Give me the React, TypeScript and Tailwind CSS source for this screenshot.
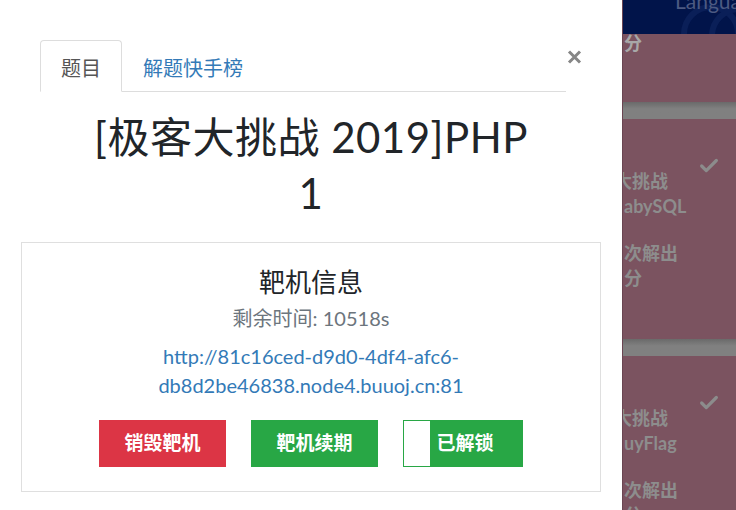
import { Check } from 'lucide-react';

const SANS = { fontFamily: 'Lato, "Noto Sans CJK SC", sans-serif' };

const Band = () => (
  <div className="h-[17px] bg-linear-to-b from-[#6a6a6a] from-0% to-[#808080] to-40%" />
);

const ChallengeCard = ({ tail }: { tail: string }) => (
  <div className="relative h-[220px]">
    <Check className="absolute left-[75px] top-[36px] text-[#8c8c8c]" size={22} strokeWidth={3.5} />
    <div className="pt-[50px] text-[18px] leading-[25px] font-bold text-[#8d8d8d] whitespace-nowrap">
      <div className="-ml-[9px]">大挑战</div>
      <div className="ml-[1px]">{tail}</div>
      <div className="mt-[22px] ml-[1px]">次解出</div>
      <div className="ml-[1px]">分</div>
    </div>
  </div>
);

export default function App() {
  return (
    <div className="flex w-[736px] h-[510px] overflow-hidden bg-white" style={SANS}>
      {/* modal */}
      <div className="w-[622px] h-full bg-white shrink-0">
        <div className="flex px-[40px] pt-[40px]">
          <ul className="flex flex-1 border-b border-[#ddd]">
            <li className="-mb-px border border-[#ddd] border-b-white rounded-t-[4px] px-[20px] pt-[13px] pb-[9px] text-[20px] leading-[28px] text-[#555]">
              题目
            </li>
            <li className="px-[21px] pt-[14px] pb-[9px] text-[20px] leading-[28px] text-[#337ab7]">
              解题快手榜
            </li>
          </ul>
          <button className="w-[16px] pt-[10px] flex justify-end">
            <svg width="15" height="14" viewBox="0 0 15 14">
              <path d="M2 1.5 L13 12.5 M13 1.5 L2 12.5" stroke="#868686" strokeWidth="3" />
            </svg>
          </button>
        </div>

        <h4 className="mx-auto mt-[17px] w-[440px] text-center text-[42px] leading-[56px] font-normal tracking-[0.5px] text-[#212529]">
          [极客大挑战 2019]PHP 1
        </h4>

        <div className="mx-[21px] mt-[21px] border border-[#dfdfdf] pt-[24px] pb-[24px] text-center">
          <h5 className="text-[26px] leading-[31px] text-[#212529]">靶机信息</h5>
          <p className="mt-[6px] text-[20px] leading-[28px] text-[#6c757d]">剩余时间: 10518s</p>
          <a className="block mx-auto mt-[10px] w-[350px] text-[20px] leading-[29px] text-[#337ab7]">
            http://81c16ced-d9d0-4df4-afc6-db8d2be46838.node4.buuoj.cn:81
          </a>
          <div className="mt-[20px] flex justify-center gap-[25px]">
            <button className="w-[127px] h-[47px] bg-[#dc3545] text-white text-[19px] font-bold">
              销毁靶机
            </button>
            <button className="w-[127px] h-[47px] bg-[#28a745] text-white text-[19px] font-bold">
              靶机续期
            </button>
            <button className="relative w-[120px] h-[47px] bg-[#28a745] border border-[#28a745] text-white text-[19px] font-bold">
              <span className="absolute left-0 top-0 bottom-0 w-[26px] bg-white" />
              <span className="pl-[4px]">已解锁</span>
            </button>
          </div>
        </div>
      </div>

      {/* dimmed page behind */}
      <div className="flex-1 h-full bg-[#7b5360] border-l border-[#6a4552] overflow-hidden">
        <div className="relative h-[34px] bg-[#01144a] overflow-hidden">
          <div className="absolute left-[58px] top-[4px] w-[60px] h-[60px] rounded-full border-[6px] border-[#0a1f58]" />
          <div className="absolute left-[86px] top-[6px] w-[60px] h-[60px] rounded-full border-[6px] border-[#0a1f58]" />
          <div className="relative -mt-[13px] ml-[52px] text-[21px] leading-[28px] text-[#4c5a82] whitespace-nowrap">
            Language
          </div>
        </div>
        <div className="h-[69px]">
          <div className="-mt-[1px] ml-[1px] text-[18px] leading-[20px] font-bold text-[#a8a8a8]">分</div>
        </div>
        <Band />
        <ChallengeCard tail="abySQL" />
        <Band />
        <ChallengeCard tail="uyFlag" />
      </div>
    </div>
  );
}
